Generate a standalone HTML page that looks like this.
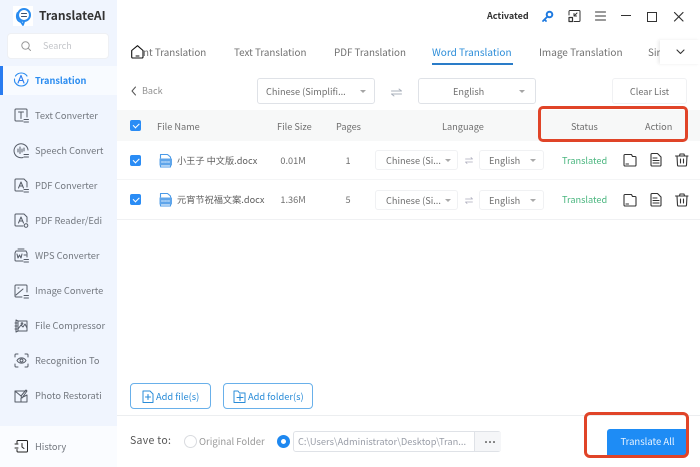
<!DOCTYPE html>
<html><head><meta charset="utf-8"><style>
html,body{margin:0;padding:0;width:700px;height:467px;overflow:hidden;background:#fff}
body{position:relative;font-family:"Noto Sans CJK SC","Liberation Sans",sans-serif;color:#707070;font-size:9.2px}
.a{position:absolute}
.t{position:absolute;line-height:16px;white-space:nowrap}
.c{transform:translateX(-50%)}
.tab{font-size:9.8px}
svg{position:absolute;overflow:visible;fill:none;stroke-linecap:round;stroke-linejoin:round}
.box{position:absolute;background:#fff;border:1px solid #e6e8ec;border-radius:3px;box-sizing:border-box}
.cb{position:absolute;left:130px;width:11px;height:11px;background:#2a8cf5;border-radius:2px}
.cb:after{content:"";position:absolute;left:3px;top:2.5px;width:5px;height:2.5px;border:solid #fff;border-width:0 0 1px 1px;transform:rotate(-45deg)}
.arrow{position:absolute;width:0;height:0;border:3px solid transparent;border-top:3.5px solid #a5a5a5;border-bottom:0}
.side{color:#747980;font-size:9.3px}
.ic{stroke:#555b66;stroke-width:1}
.act{stroke:#333;stroke-width:1}
</style></head><body>
<div class="a" style="left:0;top:0;width:117px;height:467px;background:#f0f5fe"></div>
<div class="a" style="left:0;top:66px;width:117px;height:29px;background:#f8fbff"></div>
<div class="a" style="left:0;top:66px;width:3px;height:29px;background:#2a7cf0"></div>
<div class="a" style="left:0;top:426px;width:117px;height:41px;background:#fafcff"></div>

<svg style="left:13px;top:6px" width="20" height="20" viewBox="0 0 20 20"><rect x="0" y="0" width="20" height="20" fill="#fff"/><circle cx="11" cy="9" r="6" stroke="#2a8cf0" stroke-width="2"/><path d="M4.500 7C3 11 4 15 8 16l2 3 1-3" stroke="#2a8cf0" stroke-width="1.800"/><path d="M8.500 7.500h5M8.500 10.500h5" stroke="#3a5070" stroke-width="1.100"/></svg>
<div class="t" style="left:39px;top:8px;font-size:12px;font-weight:700;color:#333">TranslateAI</div>
<div class="a" style="left:7px;top:33px;width:102px;height:26px;background:#fff;border:1px solid #eef0f4;border-radius:4px;box-sizing:border-box"></div>
<svg style="left:21px;top:41px" width="10" height="10"><circle cx="4.500" cy="4.500" r="3.700" stroke="#999" stroke-width="1"/><path d="M7.300 7.300L9.500 9.500" stroke="#999"/></svg>
<div class="t" style="left:43px;top:38px;color:#c4c6ca;font-size:9px">Search</div>

<svg style="left:13px;top:71px" width="16" height="17"><path d="M2.500 5A7 7 0 0 1 14 5M14 12A7 7 0 0 1 2.500 12M1.500 8A7 7 0 0 0 2 11.500M15 8.500A7 7 0 0 1 14 12" stroke="#2a8cf0" stroke-width="1.100"/><path d="M5 12L8 4.500 11 12M6 9.500h4" stroke="#2a7cf0" stroke-width="1.100"/></svg>
<div class="t" style="left:35px;top:72px;color:#2a8cf0;font-weight:700;font-size:9.200px">Translation</div>

<svg class="ic" style="left:14px;top:108px" width="15" height="16"><path d="M9 13H2a1 1 0 0 1-1-1V2a1 1 0 0 1 1-1h10a1 1 0 0 1 1 1v7M4.500 4h5M7 4v6.500M10 11.500h4.500M10 14h4.500"/></svg>
<div class="t side" style="left:35px;top:107px">Text Converter</div>
<svg class="ic" style="left:14px;top:143px" width="15" height="16"><path d="M9 14.500A7 7 0 1 1 14 7M4 6v3M6 4v6.500M8 6v3M10 5v3M10 11.500h4.500M10 14h4.500"/></svg>
<div class="t side" style="left:35px;top:142px">Speech Convert</div>
<svg class="ic" style="left:14px;top:178px" width="15" height="16"><path d="M9 13H2a1 1 0 0 1-1-1V2a1 1 0 0 1 1-1h8l3 3v5M4.500 10L7 4l2.500 6M5.500 8h3M10 11.500h4.500M10 14h4.500"/></svg>
<div class="t side" style="left:35px;top:177px">PDF Converter</div>
<svg class="ic" style="left:14px;top:213px" width="15" height="16"><path d="M9 13H2a1 1 0 0 1-1-1V2a1 1 0 0 1 1-1h8l3 3v5M4.500 10L7 4l2.500 6M5.500 8h3"/><circle cx="12" cy="12.500" r="1.800"/></svg>
<div class="t side" style="left:35px;top:212px">PDF Reader/Edi</div>
<svg class="ic" style="left:14px;top:248px" width="15" height="16"><path d="M9 13H2a1 1 0 0 1-1-1V5l1-2h10l1 2v4M4 1h6M3 6l1 4 1.500-3L7 10l1-4M10 7h2M10 11.500h4.500M10 14h4.500"/></svg>
<div class="t side" style="left:35px;top:247px">WPS Converter</div>
<svg class="ic" style="left:14px;top:284px" width="15" height="16"><path d="M8 13H2a1 1 0 0 1-1-1V2a1 1 0 0 1 1-1h10a1 1 0 0 1 1 1v6M2 11l7-6M4 4h1M10 11.500h4.500M10 14h4.500"/></svg>
<div class="t side" style="left:35px;top:282px">Image Converte</div>
<svg class="ic" style="left:14px;top:318px" width="15" height="15"><path d="M2 2l2 1h9v10H4l-2 1zM4 3v10M4 11l3-4 2 2 2-3 2 4M1 5h2M1 8h2M1 11h2"/><circle cx="8" cy="5.500" r=".8"/></svg>
<div class="t side" style="left:35px;top:317px">File Compressor</div>
<svg class="ic" style="left:14px;top:353px" width="15" height="15"><path d="M1 4V2a1 1 0 0 1 1-1h2M11 1h2a1 1 0 0 1 1 1v2M14 11v2a1 1 0 0 1-1 1h-2M4 14H2a1 1 0 0 1-1-1v-2M3 7.500C5 4 10 4 12 7.500 10 11 5 11 3 7.500z"/><circle cx="7.500" cy="7.500" r="1.500"/></svg>
<div class="t side" style="left:35px;top:352px">Recognition To</div>
<svg class="ic" style="left:14px;top:388px" width="15" height="16"><path d="M13 3H1v11h12V7M1 3l6 5 5-6 1 1-5 7-1-2M7 14v-4l6-3"/></svg>
<div class="t side" style="left:35px;top:387px">Photo Restorati</div>
<svg style="left:14px;top:439px" width="15" height="15"><path d="M3 4V2.500a1 1 0 0 1 1-1h8.500a1 1 0 0 1 1 1V12a1 1 0 0 1-1 1H4a1 1 0 0 1-1-1v-1.500M1 5h3M1 9h3M8 4.500V8l2 1.500" stroke="#222"/></svg>
<div class="t side" style="left:35px;top:438px">History</div>

<div class="t" style="left:487px;top:8px;font-size:9px;font-weight:700;color:#333">Activated</div>
<svg style="left:541px;top:10px" width="13" height="13"><circle cx="8.500" cy="4.500" r="2.800" stroke="#1f7ae0" stroke-width="2"/><path d="M6.500 6.500L2 11M3.500 9.500L5 11" stroke="#1f7ae0" stroke-width="1.800"/></svg>
<svg style="left:568px;top:10px" width="13" height="13"><path d="M1 5V1.500a1 1 0 0 1 1-1h9a1 1 0 0 1 1 1v9a1 1 0 0 1-1 1H6M9 3L6 6M6 3.500V6h2.500" stroke="#333"/><rect x="1" y="7.500" width="3.500" height="4" stroke="#333" stroke-width="1.200"/></svg>
<svg style="left:595px;top:11px" width="11" height="10"><path d="M.5 1h10M.5 5h10M.5 9h10" stroke="#333" stroke-width="1.100"/></svg>
<div class="a" style="left:621px;top:15px;width:10px;height:1.200px;background:#333"></div>
<div class="a" style="left:647px;top:12px;width:10px;height:10px;border:1.300px solid #333;box-sizing:border-box"></div>
<svg style="left:674px;top:12px" width="10" height="10"><path d="M.5.500l8.500 8.500M9 .500L.500 9" stroke="#333" stroke-width="1.200"/></svg>

<div class="t tab" style="left:143px;top:44px">nt Translation</div>
<svg style="left:131px;top:45px" width="13" height="14"><path d="M.7 5.500L6.500.700l5.500 4.800V12a1 1 0 0 1-1 1H1.700a1 1 0 0 1-1-1z" fill="#fff" stroke="#111" stroke-width="1.100"/><path d="M5 11h3" stroke="#111"/></svg>
<div class="t tab" style="left:234px;top:44px">Text Translation</div>
<div class="t tab" style="left:334px;top:44px">PDF Translation</div>
<div class="t tab" style="left:432px;top:44px;color:#2a8cd8;font-size:10px">Word Translation</div>
<div class="a" style="left:432px;top:63px;width:81px;height:2px;background:#2a7cc8"></div>
<div class="t tab" style="left:539px;top:44px;font-size:10px">Image Translation</div>
<div class="t tab" style="left:648px;top:44px">Sir</div>
<div class="a" style="left:660px;top:40px;width:40px;height:24px;background:#fff;box-shadow:-2px 0 3px rgba(0,0,0,.08)"></div>
<svg style="left:676px;top:49px" width="10" height="6"><path d="M1 1l3.500 3.500L8 1" stroke="#333" stroke-width="1.100"/></svg>

<svg style="left:131px;top:86px" width="6" height="10"><path d="M4.500 1L1 5l3.500 4" stroke="#555" stroke-width="1"/></svg>
<div class="t" style="left:142px;top:83px;font-size:9px;color:#909090">Back</div>
<div class="box" style="left:257px;top:78px;width:118px;height:26px;border-color:#dfe2e7"></div>
<div class="t" style="left:266px;top:82.500px;font-size:9.200px">Chinese (Simplifi...</div>
<div class="arrow" style="left:360px;top:90px"></div>
<svg style="left:391px;top:88px" width="11" height="9"><path d="M.5 3h10L8 1M10.500 6H.5L3 8" stroke="#a9b0bb" stroke-width="1"/></svg>
<div class="box" style="left:418px;top:78px;width:118px;height:26px;border-color:#dfe2e7"></div>
<div class="t" style="left:453px;top:82.500px">English</div>
<div class="arrow" style="left:519px;top:90px"></div>
<div class="box" style="left:612px;top:78px;width:75px;height:26px;border-color:#f0f1f3"></div>
<div class="t c" style="left:649.500px;top:83px">Clear List</div>

<div class="a" style="left:117px;top:110px;width:583px;height:31px;background:#f7f8f8"></div>
<div class="cb" style="top:120px"></div>
<div class="t" style="left:157px;top:118px">File Name</div>
<div class="t" style="left:277px;top:118px">File Size</div>
<div class="t" style="left:336px;top:118px">Pages</div>
<div class="t" style="left:442px;top:118px">Language</div>
<div class="t" style="left:571px;top:118px">Status</div>
<div class="t" style="left:645px;top:118px">Action</div>
<div class="a" style="left:117px;top:179px;width:583px;height:1px;background:#f4f5f6"></div>
<div class="a" style="left:117px;top:219px;width:583px;height:1px;background:#f0f1f3"></div>

<div class="cb" style="top:155px"></div>
<svg style="left:159px;top:153px" width="14" height="15"><path d="M1.500 5V1.500h7L11.500 4v1M1.500 12.500V14h10v-1.500" stroke="#4a9ae8" stroke-width="1.100"/><rect x=".5" y="5.500" width="12.500" height="7" fill="#5fa5ea"/><path d="M2.500 9h9" stroke="#d8ecff" stroke-dasharray="2 1"/></svg>
<div class="t" style="left:177px;top:152px;color:#606060">小王子 中文版.docx</div>
<div class="t c" style="left:293px;top:152px">0.01M</div>
<div class="t c" style="left:348px;top:152px">1</div>
<div class="box" style="left:375px;top:150px;width:83px;height:20px;border-color:#f0f1f3"></div>
<div class="t" style="left:386px;top:152px">Chinese (Si...</div>
<div class="arrow" style="left:445px;top:159px;border-top-color:#aaa"></div>
<svg style="left:465px;top:157px" width="8" height="7"><path d="M.5 2h7L6 .5M7.500 5H.5L2 6.500" stroke="#aab" stroke-width=".8"/></svg>
<div class="box" style="left:479px;top:150px;width:65px;height:20px;border-color:#f0f1f3"></div>
<div class="t" style="left:489px;top:152px">English</div>
<div class="arrow" style="left:530px;top:159px;border-top-color:#aaa"></div>
<div class="t" style="left:562px;top:152px;color:#4ab67f">Translated</div>
<svg class="act" style="left:623px;top:153px" width="14" height="14"><path d="M1 2.500a1 1 0 0 1 1-1h6.500l1 2H12a1 1 0 0 1 1 1V12a1 1 0 0 1-1 1H2a1 1 0 0 1-1-1zM3 11h2.500" stroke-width="1.100"/></svg>
<svg class="act" style="left:650px;top:153px" width="12" height="14"><path d="M1 1.500a1 1 0 0 1 1-1h5.500L11 4v8a1 1 0 0 1-1 1H2a1 1 0 0 1-1-1zM3 5h4M3 7.500h6M3 10h6" stroke-width="1.100"/></svg>
<svg class="act" style="left:675px;top:153px" width="14" height="14"><path d="M.5 3h12.500M4.500 3L5 1h4l.5 2M2 3l.5 9a1 1 0 0 0 1 1h7a1 1 0 0 0 1-1L12 3M5.500 6v4M8.500 6v4" stroke-width="1.100"/></svg>

<div class="cb" style="top:194px"></div>
<svg style="left:159px;top:192px" width="14" height="15"><path d="M1.500 5V1.500h7L11.500 4v1M1.500 12.500V14h10v-1.500" stroke="#4a9ae8" stroke-width="1.100"/><rect x=".5" y="5.500" width="12.500" height="7" fill="#5fa5ea"/><path d="M2.500 9h9" stroke="#d8ecff" stroke-dasharray="2 1"/></svg>
<div class="t" style="left:177px;top:191px;color:#606060">元宵节祝福文案.docx</div>
<div class="t c" style="left:293px;top:191px">1.36M</div>
<div class="t c" style="left:348px;top:191px">5</div>
<div class="box" style="left:375px;top:190px;width:83px;height:20px;border-color:#f0f1f3"></div>
<div class="t" style="left:386px;top:192px">Chinese (Si...</div>
<div class="arrow" style="left:445px;top:199px;border-top-color:#aaa"></div>
<svg style="left:465px;top:197px" width="8" height="7"><path d="M.5 2h7L6 .5M7.500 5H.5L2 6.500" stroke="#aab" stroke-width=".8"/></svg>
<div class="box" style="left:479px;top:190px;width:65px;height:20px;border-color:#f0f1f3"></div>
<div class="t" style="left:489px;top:192px">English</div>
<div class="arrow" style="left:530px;top:199px;border-top-color:#aaa"></div>
<div class="t" style="left:562px;top:191px;color:#4ab67f">Translated</div>
<svg class="act" style="left:623px;top:193px" width="14" height="14"><path d="M1 2.500a1 1 0 0 1 1-1h6.500l1 2H12a1 1 0 0 1 1 1V12a1 1 0 0 1-1 1H2a1 1 0 0 1-1-1zM3 11h2.500" stroke-width="1.100"/></svg>
<svg class="act" style="left:650px;top:193px" width="12" height="14"><path d="M1 1.500a1 1 0 0 1 1-1h5.500L11 4v8a1 1 0 0 1-1 1H2a1 1 0 0 1-1-1zM3 5h4M3 7.500h6M3 10h6" stroke-width="1.100"/></svg>
<svg class="act" style="left:675px;top:193px" width="14" height="14"><path d="M.5 3h12.500M4.500 3L5 1h4l.5 2M2 3l.5 9a1 1 0 0 0 1 1h7a1 1 0 0 0 1-1L12 3M5.500 6v4M8.500 6v4" stroke-width="1.100"/></svg>

<div class="a" style="left:130px;top:383px;width:81px;height:26px;border:1px solid #69b0ea;border-radius:4px;box-sizing:border-box"></div>
<svg style="left:142px;top:390px" width="13" height="13"><path d="M1 1h7l3 3v8.500H1z" stroke="#2a8cd8" stroke-width="1"/><path d="M3.500 7h5M6 4.500v5" stroke="#2a8cd8" stroke-width="1.100"/></svg>
<div class="t" style="left:156px;top:388px;color:#2a8cd8;font-size:9.300px">Add file(s)</div>
<div class="a" style="left:223px;top:383px;width:90px;height:26px;border:1px solid #69b0ea;border-radius:4px;box-sizing:border-box"></div>
<svg style="left:233px;top:390px" width="14" height="13"><path d="M1 1h4l1.500 2H12v9.500H1z" stroke="#2a8cd8"/><path d="M4 7.500h6M7 4.500v6" stroke="#2a8cd8" stroke-width="1.100"/></svg>
<div class="t" style="left:248px;top:388px;color:#2a8cd8;font-size:9.300px">Add folder(s)</div>

<div class="a" style="left:117px;top:415px;width:583px;height:1px;background:#eceef0"></div>
<div class="t" style="left:130px;top:433px;color:#555;font-size:10.500px;letter-spacing:.3px">Save to:</div>
<div class="a" style="left:184px;top:435px;width:13px;height:13px;border:1px solid #d9dbdf;border-radius:50%;box-sizing:border-box"></div>
<div class="t" style="left:199px;top:433px;color:#999;font-size:9.500px">Original Folder</div>
<div class="a" style="left:277px;top:435px;width:13px;height:13px;border:4px solid #1e88f0;border-radius:50%;box-sizing:border-box;background:#fff"></div>
<div class="box" style="left:293px;top:431px;width:208px;height:21px;border-color:#dfe2e7"></div>
<div class="a" style="left:474px;top:432px;width:26px;height:19px;background:#f5f6f8;border-left:1px solid #dfe2e7"></div>
<div class="t" style="left:298px;top:433px;color:#9a9ea8;font-size:9.300px;width:175px;overflow:hidden">C:\Users\Administrator\Desktop\Tran...</div>
<div class="a" style="left:485px;top:441px;width:1.500px;height:1.500px;background:#777;border-radius:50%"></div>
<div class="a" style="left:489px;top:441px;width:1.500px;height:1.500px;background:#777;border-radius:50%"></div>
<div class="a" style="left:493px;top:441px;width:1.500px;height:1.500px;background:#777;border-radius:50%"></div>
<div class="a" style="left:607px;top:429px;width:80px;height:26px;background:#1e8cf5;border-radius:3px 0 0 0"></div>
<div class="t c" style="left:647.500px;top:433px;color:#e8f3ff;font-size:9.500px">Translate All</div>

<div class="a" style="left:538px;top:106px;width:150px;height:36px;border:3px solid #e04428;border-radius:5px;box-sizing:border-box"></div>
<div class="a" style="left:584px;top:412px;width:105px;height:46px;border:3px solid #e04428;border-radius:6px;box-sizing:border-box"></div>
</body></html>
